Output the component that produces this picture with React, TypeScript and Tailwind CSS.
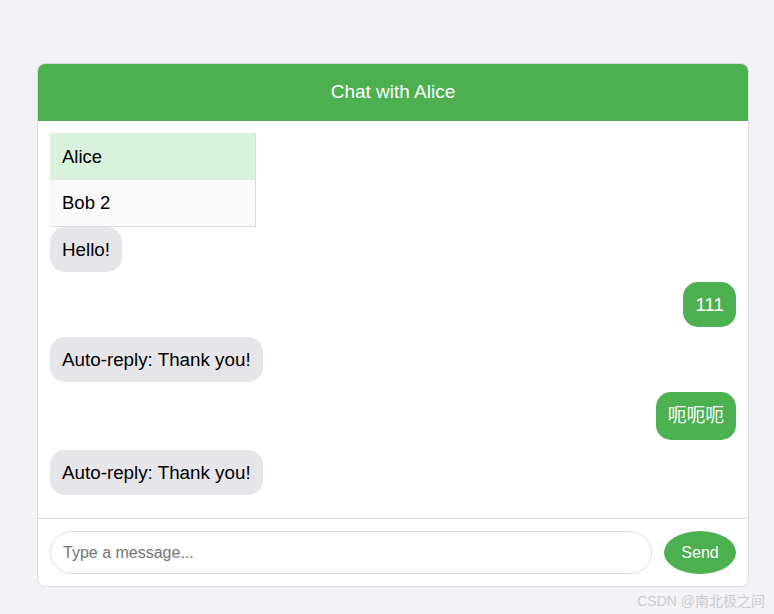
import React from "react";

type Msg = { from: "them" | "me"; text: string; cjk?: boolean };

const contacts = [
  { name: "Alice", active: true },
  { name: "Bob 2", active: false },
];

const messages: Msg[] = [
  { from: "them", text: "Hello!" },
  { from: "me", text: "111" },
  { from: "them", text: "Auto-reply: Thank you!" },
  { from: "me", text: "呃呃呃", cjk: true },
  { from: "them", text: "Auto-reply: Thank you!" },
];

export default function App() {
  return (
    <div className="min-h-screen bg-[#f2f2f7] pt-[63px] pl-[37px] font-['Liberation_Sans','Noto_Sans_CJK_SC',sans-serif]">
      <div className="w-[712px] bg-white border border-[#dddddd] rounded-[8px] overflow-hidden">
        <div className="h-[57px] bg-[#4caf50] text-white text-[19px] flex items-center justify-center">
          Chat with Alice
        </div>

        <div className="p-3 pb-[13px] flex flex-col">
          <div className="w-[206px] border-r border-b border-[#dddddd]">
            <div className="h-[47px] px-3 flex items-center text-[18.5px] text-black bg-[#d8f2dc]">
              {contacts[0].name}
            </div>
            <div className="h-[46px] px-3 flex items-center text-[18.5px] text-black bg-[#f9f9f9]">
              {contacts[1].name}
            </div>
          </div>

          {messages.map((m, i) => (
            <div
              key={i}
              className={
                "flex mb-[10px] " + (m.from === "me" ? "justify-end" : "justify-start")
              }
            >
              <div
                className={
                  (m.from === "me"
                    ? "bg-[#4caf50] text-white"
                    : "bg-[#e5e5ea] text-black") +
                  (m.cjk ? " leading-[28px]" : " leading-[25px]") +
                  " px-3 py-[10px] rounded-[15px] text-[18.8px]"
                }
              >
                {m.text}
              </div>
            </div>
          ))}
        </div>

        <div className="border-t border-[#dddddd] p-3 flex gap-3">
          <input
            className="flex-1 h-[43px] rounded-full border border-[#dddddd] px-3 text-[16px] outline-none placeholder:text-[#757575]"
            placeholder="Type a message..."
          />
          <button className="w-[72px] h-[43px] rounded-[50%] bg-[#4caf50] text-white text-[16px]">
            Send
          </button>
        </div>
      </div>

      <div className="w-[728px] flex justify-end mt-[4px] text-[14px] text-[#cccccc]">
        CSDN @南北极之间
      </div>
    </div>
  );
}
